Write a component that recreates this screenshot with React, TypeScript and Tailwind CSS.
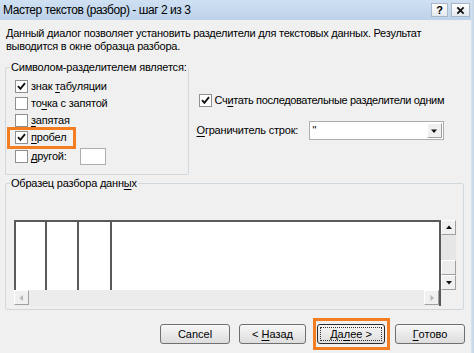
import type { ReactNode } from 'react'

function Check({ checked }: { checked?: boolean }) {
  return (
    <span className="flex h-[13px] w-[13px] shrink-0 items-center justify-center border border-[#8e8f8f] bg-white">
      {checked && (
        <svg viewBox="0 0 9 9" className="h-[9px] w-[9px]">
          <path d="M1 4.2 L3.4 6.8 L8 1.2" stroke="#111" strokeWidth="1.9" fill="none" />
        </svg>
      )}
    </span>
  )
}

function U({ children }: { children: ReactNode }) {
  return <span className="underline underline-offset-[2px]">{children}</span>
}

function Row({ checked, children }: { checked?: boolean; children: ReactNode }) {
  return (
    <div className="flex h-[17px] items-center gap-[3px]">
      <Check checked={checked} />
      <span>{children}</span>
    </div>
  )
}

function Btn({ children, primary }: { children: ReactNode; primary?: boolean }) {
  return (
    <div
      className={`flex h-[20px] items-center justify-center rounded-[3px] border bg-gradient-to-b from-[#f7f7f7] to-[#dddddd] ${
        primary ? 'border-[#2b2b2b] p-[2px]' : 'border-[#707070]'
      }`}
    >
      {primary ? (
        <span className="flex h-full w-full items-center justify-center border border-dotted border-[#333]">{children}</span>
      ) : (
        children
      )}
    </div>
  )
}

function ScrollBtn({ dir }: { dir: 'up' | 'down' | 'left' | 'right' }) {
  const d = {
    up: 'M1 5 L4 1.5 L7 5 Z',
    down: 'M1 2 L4 5.5 L7 2 Z',
    left: 'M5 1 L1.5 4 L5 7 Z',
    right: 'M2.5 1 L6 4 L2.5 7 Z',
  }[dir]
  const dim = dir === 'left' || dir === 'right'
  return (
    <div className="flex h-[15px] w-[15px] items-center justify-center border border-b-[#a0a0a0] border-l-white border-r-[#a0a0a0] border-t-white bg-[#f0f0f0]">
      <svg viewBox="0 0 8 8" className="h-[8px] w-[8px]">
        <path d={d} fill={dim ? '#b5b5b5' : '#111'} />
      </svg>
    </div>
  )
}

export default function App() {
  return (
    <div className="flex h-[353px] w-[474px] overflow-hidden bg-[#f0f0f0] font-['Liberation_Sans',Arial,sans-serif] text-[11px] leading-[13px] text-black">
      <div className="flex w-[471px] flex-col">
        {/* заголовок окна */}
        <div className="flex h-[20px] shrink-0 items-center justify-between bg-gradient-to-b from-[#cfe0f2] to-[#bcd2ea] pl-[3px] pr-[1px]">
          <span className="text-[12px] tracking-[-0.45px]">Мастер текстов (разбор) - шаг 2 из 3</span>
          <div className="flex gap-[3px]">
            <div className="flex h-[14px] w-[17px] items-center justify-center border border-[#a9b8c8] bg-gradient-to-b from-white to-[#e4e9ef] text-[11px] font-bold">
              ?
            </div>
            <div className="flex h-[14px] w-[19px] items-center justify-center border border-[#a9b8c8] bg-gradient-to-b from-white to-[#e4e9ef]">
              <svg viewBox="0 0 10 10" className="h-[9px] w-[9px]">
                <path d="M1.5 1.5 L8.5 8.5 M8.5 1.5 L1.5 8.5" stroke="#111" strokeWidth="2" />
              </svg>
            </div>
          </div>
        </div>

        <div className="flex flex-1 flex-col pl-[5px]">
          <p className="mt-[7px] pl-[1px] tracking-[-0.25px]">
            Данный диалог позволяет установить разделители для текстовых данных. Результат
            <br />
            выводится в окне образца разбора.
          </p>

          <div className="mt-[7px] flex">
            <fieldset className="w-[183px] rounded-[2px] border border-[#d0d8de]">
              <legend className="ml-[4px] whitespace-nowrap px-[1px] leading-[14px] tracking-[-0.2px]">
                Символом-разделителем является:
              </legend>
              <div className="flex flex-col pb-[7px] pl-[9px] pt-[4px] tracking-[-0.2px]">
                <Row checked>
                  знак <U>т</U>абуляции
                </Row>
                <Row>
                  то<U>ч</U>ка с запятой
                </Row>
                <Row>
                  <U>з</U>апятая
                </Row>
                <div className="relative">
                  <Row checked>
                    <U>п</U>робел
                  </Row>
                  <div className="pointer-events-none absolute left-[-8px] top-[-2px] h-[22px] w-[69px] border-[3px] border-[#f47d22]" />
                </div>
                <div className="flex h-[21px] items-center gap-[3px]">
                  <Check />
                  <span>
                    <U>д</U>ругой:
                  </span>
                  <span className="ml-[10px] h-[17px] w-[26px] border border-[#abadb3] bg-white" />
                </div>
              </div>
            </fieldset>

            <div className="flex flex-1 flex-col pl-[10px] tracking-[-0.2px]">
              <div className="mt-[32px] flex h-[17px] items-center gap-[3px] whitespace-nowrap">
                <Check checked />
                <span className="tracking-[-0.35px]">
                  Сч<U>и</U>тать последовательные разделители одним
                </span>
              </div>
              <div className="ml-[-2px] mt-[12px] flex h-[19px] items-center">
                <span className="w-[112px]">
                  <U>О</U>граничитель строк:
                </span>
                <div className="flex h-[19px] w-[135px] items-center justify-between border border-[#abadb3] bg-white pl-[3px] pr-[1px]">
                  <span>"</span>
                  <div className="flex h-[15px] w-[15px] items-center justify-center border border-b-[#a0a0a0] border-l-white border-r-[#a0a0a0] border-t-white bg-[#f0f0f0]">
                    <svg viewBox="0 0 8 8" className="h-[8px] w-[8px]">
                      <path d="M1 2.5 L4 6 L7 2.5 Z" fill="#111" />
                    </svg>
                  </div>
                </div>
              </div>
            </div>
          </div>

          <fieldset className="mt-[1px] w-[459px] rounded-[2px] border border-[#d0d8de]">
            <legend className="ml-[4px] whitespace-nowrap px-[1px] leading-[14px] tracking-[-0.2px]">
              Образец разбора данн<U>ы</U>х
            </legend>
            <div className="mb-[3px] ml-[8px] mt-[30px] flex h-[86px] w-[442px] flex-col">
              <div className="flex h-[70px]">
                <div className="flex flex-1 border-l-2 border-r-2 border-t-2 border-[#5a5a5a] bg-white">
                  <div className="w-[31px] border-r-2 border-[#5a5a5a]" />
                  <div className="w-[32px] border-r-2 border-[#5a5a5a]" />
                  <div className="w-[33px] border-r-2 border-[#5a5a5a]" />
                </div>
                <div className="flex w-[15px] flex-col bg-[#e6e6e6]">
                  <ScrollBtn dir="up" />
                  <div className="flex-1" />
                  <div className="h-[15px] border border-b-[#a0a0a0] border-l-white border-r-[#a0a0a0] border-t-white bg-[#ececec]" />
                  <ScrollBtn dir="down" />
                </div>
              </div>
              <div className="flex h-[16px]">
                <div className="flex flex-1 items-start justify-between border-r-2 border-[#5a5a5a] bg-[#ececec]">
                  <ScrollBtn dir="left" />
                  <ScrollBtn dir="right" />
                </div>
                <div className="w-[15px] bg-[#f0f0f0]" />
              </div>
            </div>
          </fieldset>

          <div className="mt-[14px] flex">
            <div className="ml-[155px] w-[70px]">
              <Btn>Cancel</Btn>
            </div>
            <div className="ml-[9px] w-[67px]">
              <Btn>
                &lt;&nbsp;<U>Н</U>азад
              </Btn>
            </div>
            <div className="relative ml-[11px] w-[68px]">
              <Btn primary>
                Да<U>л</U>ее &gt;
              </Btn>
              <div className="pointer-events-none absolute left-[-4px] top-[-6px] h-[32px] w-[77px] border-[3px] border-[#f47d22]" />
            </div>
            <div className="ml-[10px] w-[70px]">
              <Btn>
                <U>Г</U>отово
              </Btn>
            </div>
          </div>
        </div>
      </div>
      <div className="w-[3px] bg-gradient-to-r from-[#d9e3ee] to-[#c3d4e7]" />
    </div>
  )
}
